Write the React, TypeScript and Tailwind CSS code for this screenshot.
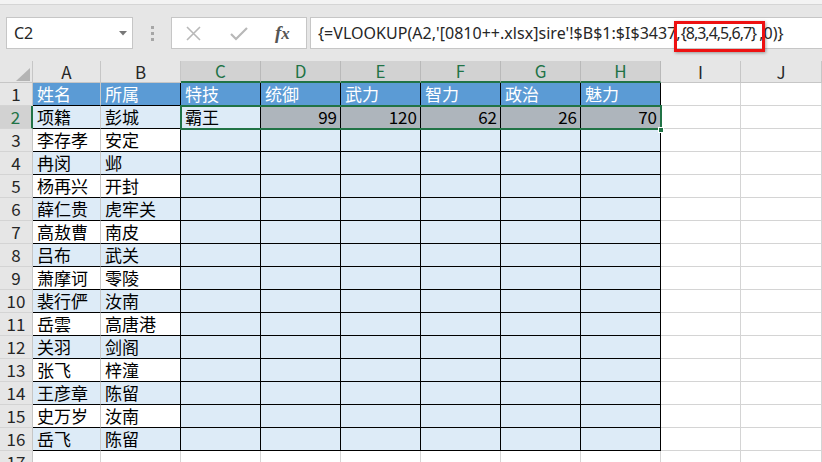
import React from "react";

const CJK = "font-['Noto_Sans_CJK_SC',sans-serif]";

const names: [string, string][] = [
  ["姓名", "所属"],
  ["项籍", "彭城"],
  ["李存孝", "安定"],
  ["冉闵", "邺"],
  ["杨再兴", "开封"],
  ["薛仁贵", "虎牢关"],
  ["高敖曹", "南皮"],
  ["吕布", "武关"],
  ["萧摩诃", "零陵"],
  ["裴行俨", "汝南"],
  ["岳雲", "高唐港"],
  ["关羽", "剑阁"],
  ["张飞", "梓潼"],
  ["王彦章", "陈留"],
  ["史万岁", "汝南"],
  ["岳飞", "陈留"],
];

const head2 = ["特技", "统御", "武力", "智力", "政治", "魅力"];
const nums = ["99", "120", "62", "26", "70"];
const cols = ["A", "B", "C", "D", "E", "F", "G", "H", "I", "J"];
const widths = ["w-[68px]", "w-[80px]", "w-[80px]", "w-[80px]", "w-[80px]", "w-[80px]", "w-[80px]", "w-[80px]", "w-[80px]", "w-[81px]"];

function ColHeader() {
  return (
    <div className="flex h-[22px]">
      <div className="relative w-[33px] h-[22px] bg-[#e6e6e6] border-r border-b border-[#c6c6c6] shrink-0">
        <svg className="absolute left-[16px] top-[7px]" width="14" height="13" viewBox="0 0 14 13">
          <polygon points="14,0 14,13 0,13" fill="#b4b4b4" />
        </svg>
      </div>
      {cols.map((c, i) => {
        const sel = i >= 2 && i <= 7;
        return (
          <div
            key={c}
            className={`${widths[i]} shrink-0 h-[22px] flex items-center justify-center border-r text-[17px] ${CJK} ${
              sel
                ? "bg-[#d2d2d2] text-[#217346] border-b-2 border-b-[#217346] border-r-[#b9b9b9]"
                : "bg-[#e6e6e6] text-[#262626] border-b border-b-[#c6c6c6] border-r-[#c6c6c6]"
            }`}
          >
            <span className="leading-[20px]">{c}</span>
          </div>
        );
      })}
    </div>
  );
}

function Row({ r }: { r: number }) {
  const isData = r <= 16;
  const rowSel = r === 2;
  const cells: React.ReactNode[] = [];
  for (let i = 0; i < 10; i++) {
    let bg = "bg-white";
    let border = "border-r border-b border-r-[#d4d4d4] border-b-[#d4d4d4]";
    let content: React.ReactNode = null;
    let align = "justify-start pl-[4px]";
    let color = "text-black";
    if (isData && i <= 7) {
      border = "border-r border-b border-b-black " + (i === 0 ? "border-r-[#c8c8c8]" : "border-r-black");
      if (r === 1) {
        bg = "bg-[#5b9bd5]";
        color = "text-white";
        content = i === 0 ? names[0][0] : i === 1 ? names[0][1] : head2[i - 2];
      } else if (i <= 1) {
        bg = r % 2 === 0 ? "bg-[#ddebf7]" : "bg-white";
        content = names[r - 1][i];
      } else if (r === 2) {
        if (i === 2) {
          bg = "bg-[#ddebf7]";
          content = "霸王";
        } else {
          bg = "bg-[#aeb5bc]";
          content = nums[i - 3];
          align = "justify-end pr-[3px]";
        }
      } else {
        bg = "bg-[#ddebf7]";
      }
    }
    cells.push(
      <div key={i} className={`${widths[i]} shrink-0 h-[23px] flex items-center ${align} ${bg} ${border} ${color} text-[17px] ${CJK}`}>
        <span className="leading-[22px] whitespace-nowrap">{content}</span>
      </div>
    );
  }
  return (
    <div className="flex h-[23px]">
      <div
        className={`w-[33px] shrink-0 h-[23px] flex items-center justify-center border-b border-b-[#d4d4d4] text-[17px] ${CJK} ${
          rowSel
            ? "bg-[#d2d2d2] text-[#217346] border-r-2 border-r-[#217346]"
            : "bg-[#e6e6e6] text-[#262626] border-r border-r-[#c6c6c6]"
        }`}
      >
        <span className="leading-[22px]">{r}</span>
      </div>
      {cells}
    </div>
  );
}

export default function App() {
  const rows = Array.from({ length: 17 }, (_, i) => i + 1);
  return (
    <div className="w-[822px] h-[462px] overflow-hidden bg-white relative">
      {/* top ribbon / formula bar */}
      <div className="h-[61px] bg-[#e6e6e6] relative">
        <div className="h-[5px] bg-[#f3f3f3] border-b border-[#d5d5d5]" />
        <div className="flex items-start pt-[12px] pl-[6px]">
          <div className={`relative w-[127px] h-[32px] bg-white border border-[#c6c6c6] flex items-center pl-[7px] text-[16px] text-[#262626] font-['Noto_Sans',sans-serif]`}>
            <span className="leading-[20px]">C2</span>
            <svg className="absolute left-[112px] top-[13px]" width="8" height="5" viewBox="0 0 8 5">
              <polygon points="0,0 8,0 4,4.5" fill="#777" />
            </svg>
          </div>
          <div className="w-[38px] h-[32px] flex flex-col items-center justify-center gap-[3px]">
            <div className="w-[3px] h-[3px] bg-[#a6a6a6]" />
            <div className="w-[3px] h-[3px] bg-[#a6a6a6]" />
            <div className="w-[3px] h-[3px] bg-[#a6a6a6]" />
          </div>
          <div className="relative w-[136px] h-[32px] bg-white border border-[#c6c6c6]">
            <svg className="absolute left-[14px] top-[8px]" width="15" height="15" viewBox="0 0 15 15">
              <path d="M1 1 L14 14 M14 1 L1 14" stroke="#b8b8b8" strokeWidth="1.6" />
            </svg>
            <svg className="absolute left-[58px] top-[8px]" width="18" height="15" viewBox="0 0 18 15">
              <path d="M1 8 L6 13 L17 2" stroke="#b8b8b8" strokeWidth="2.2" fill="none" />
            </svg>
            <span className="absolute left-[103px] top-[3px] text-[19px] italic font-bold text-[#555] font-['Liberation_Serif',serif] leading-[24px]">
              f<span className="text-[17px]">x</span>
            </span>
          </div>
          <div className="ml-[3px] flex-1 h-[32px] bg-white border border-[#c6c6c6] border-r-0 flex items-center pl-[7px] text-[16px] text-[#262626] font-['Noto_Sans',sans-serif]">
            <span className="leading-[22px] whitespace-nowrap">
              <span className="tracking-[0.03px]">{"{=VLOOKUP(A2,'[0810++.xlsx]sire'!$B$1:$I$3437,"}</span>
              <span className="tracking-[-1px]">{"{8,3,4,5,6,7}"}</span>
              <span className="pl-[3px]">{",0)}"}</span>
            </span>
          </div>
        </div>
        <div className="absolute left-[674px] top-[21px] w-[91px] h-[31px] border-[3px] border-[#ee1111] shadow-[1px_1px_3px_rgba(0,0,0,0.35)]" />
      </div>

      {/* grid */}
      <div className="relative">
        <ColHeader />
        {rows.map((r) => (
          <Row key={r} r={r} />
        ))}
        <div className="absolute left-[180px] top-[44px] w-[482px] h-[25px] border-2 border-[#217346]" />
        <div className="absolute left-[658px] top-[66px] w-[6px] h-[6px] bg-[#217346] border border-white" />
      </div>
    </div>
  );
}
